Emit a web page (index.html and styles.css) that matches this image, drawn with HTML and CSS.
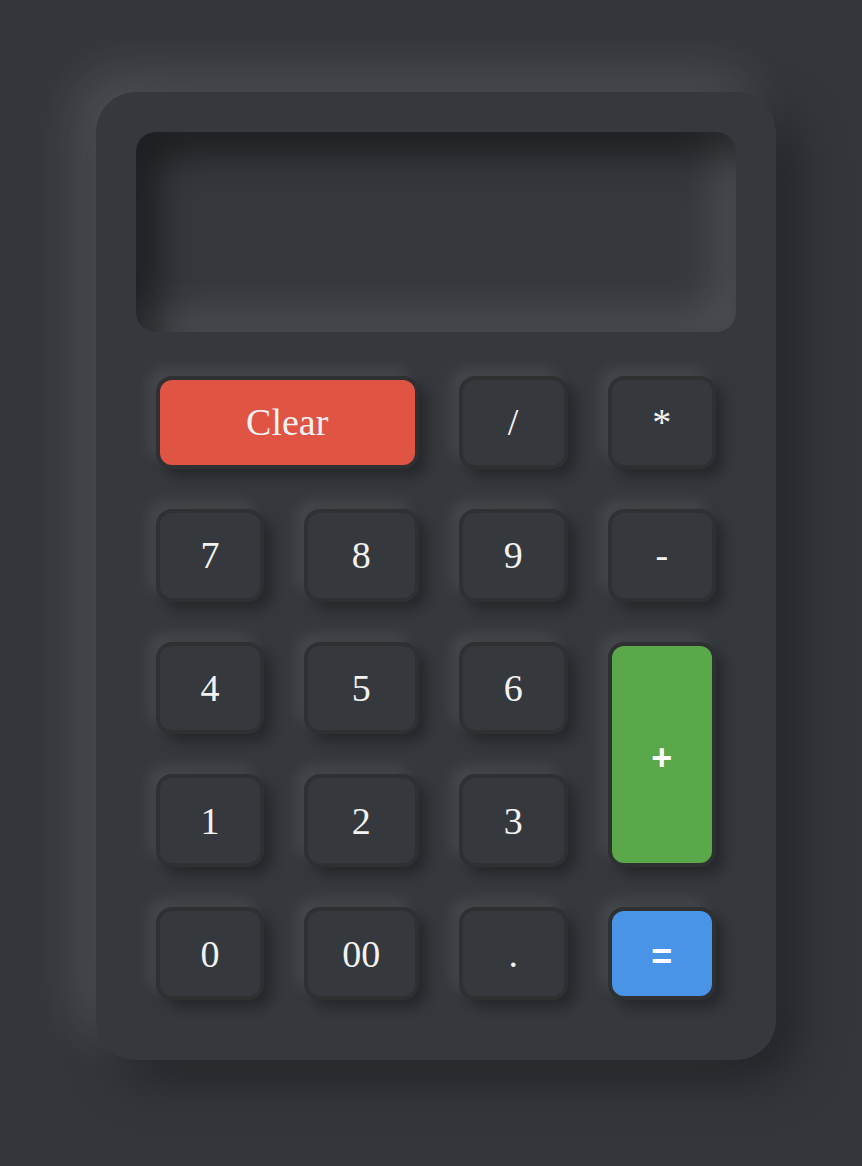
FILE: index.html
```html
<!DOCTYPE html>
<html lang="en">
<head>
  <meta charset="UTF-8" />
  <meta name="viewport" content="width=device-width, initial-scale=1.0"/>
  <title>Calculator</title>
  <link rel="stylesheet" href="styles.css">
</head>
<body>

  <div class="calculator">
    <div class="display" id="display"></div>

    <div class="keys">
      <button class="key clear wide" onclick="clearDisplay()">Clear</button>
      <button class="key" onclick="press('/')">/</button>
      <button class="key" onclick="press('*')">*</button>

      <button class="key" onclick="press('7')">7</button>
      <button class="key" onclick="press('8')">8</button>
      <button class="key" onclick="press('9')">9</button>
      <button class="key" onclick="press('-')">-</button>

      <button class="key" onclick="press('4')">4</button>
      <button class="key" onclick="press('5')">5</button>
      <button class="key" onclick="press('6')">6</button>
      <button class="key plus tall" onclick="press('+')">+</button>

      <button class="key" onclick="press('1')">1</button>
      <button class="key" onclick="press('2')">2</button>
      <button class="key" onclick="press('3')">3</button>

      <button class="key" onclick="press('0')">0</button>
      <button class="key" onclick="press('00')">00</button>
      <button class="key" onclick="press('.')">.</button>
      <button class="key equal" onclick="calculate()">=</button>
    </div>
  </div>

  <script>
    const display = document.getElementById('display');

    // Append a key to the display
    function press(value) {
      display.textContent += value;
    }

    // Wipe the display
    function clearDisplay() {
      display.textContent = '';
    }

    // Work out the expression on the display
    function calculate() {
      try {
        display.textContent = Function('return ' + display.textContent)();
      } catch (e) {
        display.textContent = 'Error';
      }
    }
  </script>

</body>
</html>
```

FILE: styles.css
```css
body {
  margin: 0;
  background: #33373b;
  font-family: "Liberation Serif", serif;
  min-height: 100vh;
}
.calculator {
  width: 680px;
  box-sizing: border-box;
  margin: 92px 0 0 96px;
  padding: 40px;
  background: #35393d;
  border-radius: 40px;
  box-shadow: 20px 20px 50px rgba(0,0,0,0.35), -20px -20px 50px rgba(255,255,255,0.13);
}
.display {
  height: 200px;
  border-radius: 20px;
  background: #35393d;
  box-shadow: inset 20px 20px 40px rgba(0,0,0,0.5), inset -20px -20px 40px rgba(255,255,255,0.12);
  color: #fff;
  font-size: 48px;
  text-align: right;
  padding: 0 30px;
  line-height: 200px;
  box-sizing: border-box;
  overflow: hidden;
}
.keys {
  margin-top: 24px;
  height: 664px;
  box-sizing: border-box;
  padding: 20px;
  display: grid;
  grid-template-columns: 108fr 114fr 109fr 108fr;
  grid-template-rows: repeat(5, 1fr);
  gap: 40px;
}
.key {
  font-family: "Liberation Serif", serif;
  font-size: 38px;
  color: #f2f2f2;
  background: #35393d;
  border: 4px solid #2f3032;
  border-radius: 16px;
  box-shadow: 8px 8px 14px rgba(0,0,0,0.3), -8px -8px 14px rgba(255,255,255,0.08);
  cursor: pointer;
  padding: 0;
}
.key:active {
  box-shadow: inset 6px 6px 10px rgba(0,0,0,0.35), inset -6px -6px 10px rgba(255,255,255,0.07);
}
.wide {
  grid-column: span 2;
}
.tall {
  grid-row: span 2;
}
.clear {
  background: #e05443;
}
.plus,
.equal {
  font-family: "Liberation Sans", sans-serif;
  font-weight: bold;
  font-size: 36px;
  color: #fff;
  padding-top: 7px;
}
.plus {
  background: #5aa84a;
}
.equal {
  background: #4a94e8;
}
```
